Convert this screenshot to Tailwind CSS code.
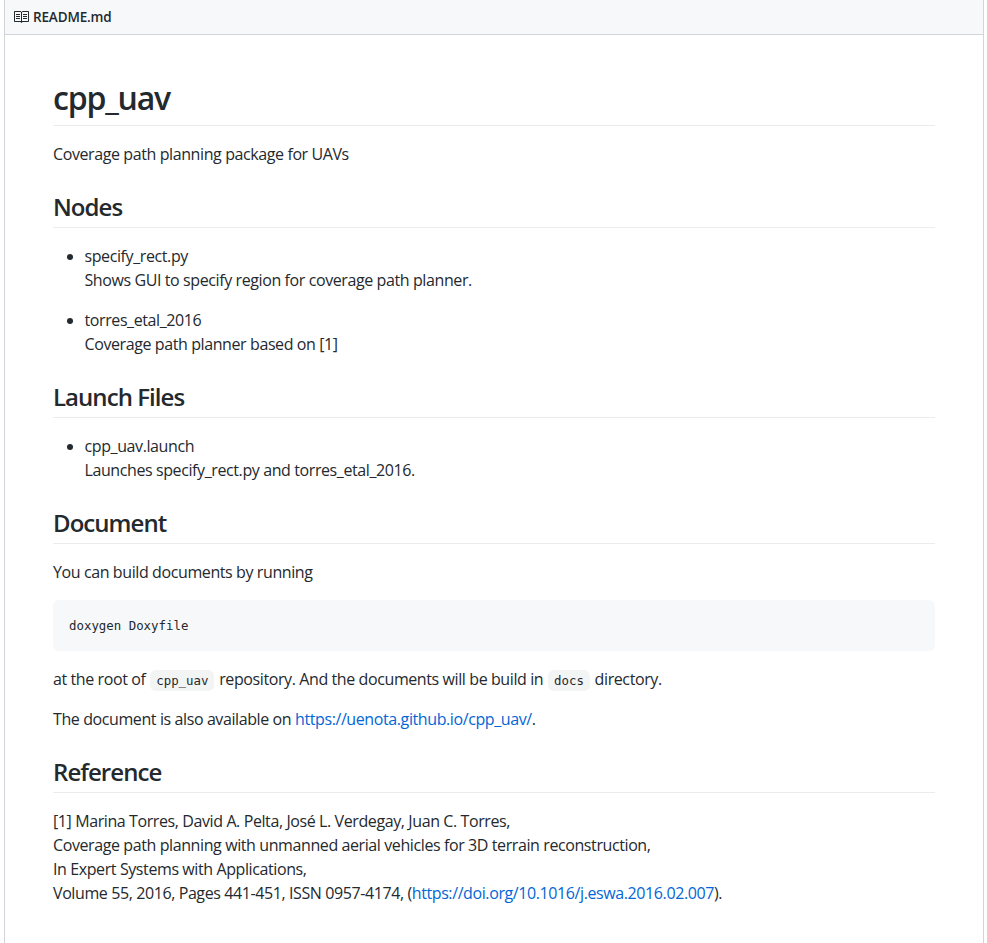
<!DOCTYPE html>
<html lang="en">
<head>
    <meta charset="UTF-8">
    <title>README.md</title>
    <script src="https://cdn.jsdelivr.net/npm/@tailwindcss/browser@4"></script>
</head>
<body class="bg-white h-[943px] overflow-hidden font-['Open_Sans',sans-serif] text-[#24292e]">
    <div class="ml-1 w-[980px] h-[943px] border-x border-[#d1d5da]">
        <!-- Cabecera -->
        <div class="h-[35px] bg-[#f6f8fa] border-b border-[#d1d5da] pl-2 flex items-center gap-1 text-[13.5px] font-semibold tracking-[-0.15px]">
            <svg width="16" height="16" viewBox="0 0 16 16" fill="#24292e"><path fill-rule="evenodd" d="M3 5h4v1H3V5zm0 3h4V7H3v1zm0 2h4V9H3v1zm11-5h-4v1h4V5zm0 2h-4v1h4V7zm0 2h-4v1h4V9zm2-6v9c0 .55-.45 1-1 1H9.5l-1 1-1-1H2c-.55 0-1-.45-1-1V3c0-.55.45-1 1-1h5.5l1 1 1-1H15c.55 0 1 .45 1 1zm-8 .5L7.5 3H2v9h6V3.5zm7-.5H9.5l-.5.5V12h6V3z"/></svg>
            <span>README.md</span>
        </div>
        <!-- Contenido -->
        <article class="px-12 text-[16px] leading-6 tracking-[-0.4px]">
            <h1 class="mt-[43px] pb-[7px] border-b border-[#eaecef] text-[32px] leading-10 font-semibold tracking-[-1.2px]">cpp_uav</h1>
            <p class="mt-4">Coverage path planning package for UAVs</p>

            <h2 class="mt-[26px] pb-[5px] border-b border-[#eaecef] text-2xl leading-[30px] font-semibold tracking-[-0.95px]">Nodes</h2>
            <ul class="mt-4 pl-[31.5px] list-disc">
                <li>specify_rect.py<br>Shows GUI to specify region for coverage path planner.</li>
                <li class="mt-4">torres_etal_2016<br>Coverage path planner based on [1]</li>
            </ul>

            <h2 class="mt-[26px] pb-[5px] border-b border-[#eaecef] text-2xl leading-[30px] font-semibold tracking-[-0.95px]">Launch Files</h2>
            <ul class="mt-4 pl-[31.5px] list-disc">
                <li>cpp_uav.launch<br>Launches specify_rect.py and torres_etal_2016.</li>
            </ul>

            <h2 class="mt-[26px] pb-[5px] border-b border-[#eaecef] text-2xl leading-[30px] font-semibold tracking-[-0.95px]">Document</h2>
            <p class="mt-4">You can build documents by running</p>
            <pre class="mt-4 h-[51px] px-4 flex items-center rounded-md bg-[#f6f8fa] font-['DejaVu_Sans_Mono',monospace] text-[12.4px] tracking-normal">doxygen Doxyfile</pre>
            <p class="mt-4">at the root of <code class="mx-px px-[6px] py-[3px] rounded-md bg-[#f3f4f4] font-['DejaVu_Sans_Mono',monospace] text-[12.4px] leading-none tracking-normal">cpp_uav</code> repository. And the documents will be build in <code class="mx-px px-[6px] py-[3px] rounded-md bg-[#f3f4f4] font-['DejaVu_Sans_Mono',monospace] text-[12.4px] leading-none tracking-normal">docs</code> directory.</p>
            <p class="mt-4">The document is also available on <a href="#" class="text-[#0366d6]">https://uenota.github.io/cpp_uav/</a>.</p>

            <h2 class="mt-[26px] pb-[5px] border-b border-[#eaecef] text-2xl leading-[30px] font-semibold tracking-[-0.95px]">Reference</h2>
            <p class="mt-4">[1] Marina Torres, David A. Pelta, José L. Verdegay, Juan C. Torres,<br>Coverage path planning with unmanned aerial vehicles for 3D terrain reconstruction,<br>In Expert Systems with Applications,<br>Volume 55, 2016, Pages 441-451, ISSN 0957-4174, (<a href="#" class="text-[#0366d6]">https://doi.org/10.1016/j.eswa.2016.02.007</a>).</p>
        </article>
    </div>
</body>
</html>
